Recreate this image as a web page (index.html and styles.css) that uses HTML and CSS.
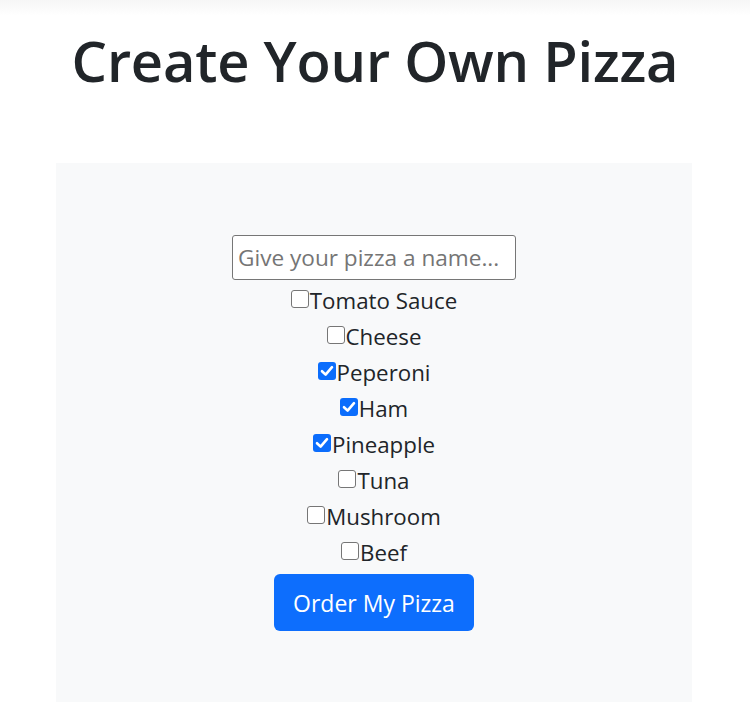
FILE: index.html
```html
<!DOCTYPE html>
<html lang="en">
<head>
<meta charset="utf-8">
<title>Create Your Own Pizza</title>
<link rel="stylesheet" href="styles.css">
</head>
<body>
<header class="page-header">
  <h1 class="title">Create Your Own Pizza</h1>
</header>
<main class="panel">
  <form class="pizza-form">
    <input class="name-input" type="text" placeholder="Give your pizza a name...">
    <label class="topping"><input class="cb" type="checkbox"><span class="box"><svg viewBox="0 0 18 18"><path d="M4 9.2 L7.6 12.6 L14 5.2"/></svg></span>Tomato Sauce</label>
    <label class="topping"><input class="cb" type="checkbox"><span class="box"><svg viewBox="0 0 18 18"><path d="M4 9.2 L7.6 12.6 L14 5.2"/></svg></span>Cheese</label>
    <label class="topping"><input class="cb" type="checkbox" checked><span class="box"><svg viewBox="0 0 18 18"><path d="M4 9.2 L7.6 12.6 L14 5.2"/></svg></span>Peperoni</label>
    <label class="topping"><input class="cb" type="checkbox" checked><span class="box"><svg viewBox="0 0 18 18"><path d="M4 9.2 L7.6 12.6 L14 5.2"/></svg></span>Ham</label>
    <label class="topping"><input class="cb" type="checkbox" checked><span class="box"><svg viewBox="0 0 18 18"><path d="M4 9.2 L7.6 12.6 L14 5.2"/></svg></span>Pineapple</label>
    <label class="topping"><input class="cb" type="checkbox"><span class="box"><svg viewBox="0 0 18 18"><path d="M4 9.2 L7.6 12.6 L14 5.2"/></svg></span>Tuna</label>
    <label class="topping"><input class="cb" type="checkbox"><span class="box"><svg viewBox="0 0 18 18"><path d="M4 9.2 L7.6 12.6 L14 5.2"/></svg></span>Mushroom</label>
    <label class="topping"><input class="cb" type="checkbox"><span class="box"><svg viewBox="0 0 18 18"><path d="M4 9.2 L7.6 12.6 L14 5.2"/></svg></span>Beef</label>
    <button class="order-btn" type="button">Order My Pizza</button>
  </form>
</main>
</body>
</html>
```
FILE: styles.css
```css
html, body {
  margin: 0;
  padding: 0;
}
body {
  font-family: "Open Sans", "Noto Sans", sans-serif;
  color: #212529;
  background: #fff linear-gradient(#f6f6f6, #ffffff 16px) no-repeat;
  background-size: 100% 16px;
  min-height: 702px;
}
.page-header {
  padding-top: 20px;
  height: 163px;
  box-sizing: border-box;
}
.title {
  margin: 0;
  text-align: center;
  font-size: 56px;
  font-weight: 600;
  line-height: 80px;
  letter-spacing: -0.2px;
}
.panel {
  margin: 0 58px 0 56px;
  background: #f8f9fa;
  padding: 72px 0;
}
.pizza-form {
  display: flex;
  flex-direction: column;
  align-items: center;
}
.name-input {
  width: 284px;
  height: 45px;
  box-sizing: border-box;
  border: 1px solid #767676;
  border-radius: 3px;
  padding: 0 5px;
  font-family: inherit;
  font-size: 22.6px;
  color: #212529;
  background: #fff;
  margin: 0 0 2px;
}
.name-input::placeholder {
  color: #757575;
}
.topping {
  display: flex;
  align-items: center;
  height: 36px;
  font-size: 22.3px;
  position: relative;
}
.cb {
  position: absolute;
  opacity: 0;
  width: 1px;
  height: 1px;
  margin: 0;
}
.box {
  width: 18px;
  height: 18px;
  box-sizing: border-box;
  border: 1.5px solid #767676;
  border-radius: 3px;
  background: #fff;
  margin: -3px 1px 0 0;
  display: flex;
}
.box svg {
  width: 100%;
  height: 100%;
  display: none;
}
.box path {
  fill: none;
  stroke: #fff;
  stroke-width: 2.6;
  stroke-linecap: round;
  stroke-linejoin: round;
}
.cb:checked + .box {
  background: #0b6dfc;
  border: none;
}
.cb:checked + .box svg {
  display: block;
}
.order-btn {
  margin-top: 4px;
  width: 200px;
  height: 57px;
  border: none;
  border-radius: 6px;
  background: #0d6efd;
  color: #fff;
  font-family: inherit;
  font-size: 23px;
  cursor: pointer;
}
```
